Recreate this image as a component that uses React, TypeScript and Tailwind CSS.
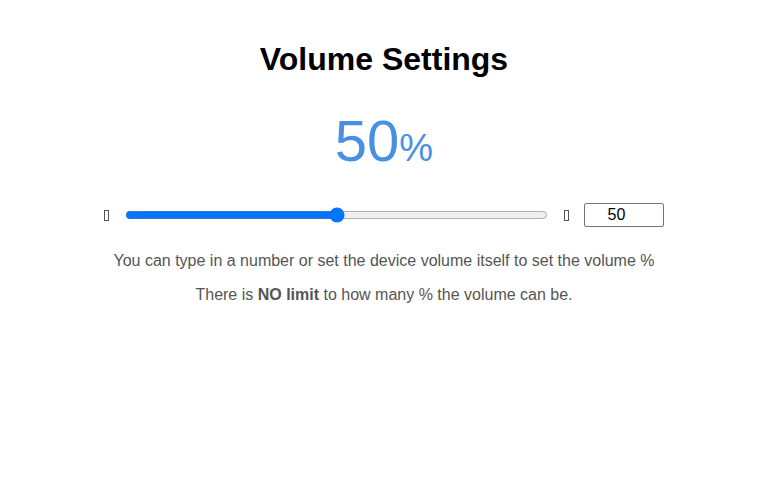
import { useState } from "react";

function MissingGlyph() {
  return <span className="block w-[5px] h-[11px] border border-[#555]" />;
}

export default function App() {
  const [volume, setVolume] = useState(50);

  return (
    <div className="min-h-[480px] bg-white pt-[39px] text-center font-['Liberation_Sans',Arial,sans-serif]">
      <h1 className="text-[32px] leading-[40px] font-bold text-black">Volume Settings</h1>

      <div className="mt-[33px] flex items-baseline justify-center text-[#4a90e2] leading-none">
        <span className="text-[58px]">{volume}</span>
        <span className="text-[38px]">%</span>
      </div>

      <div className="mt-[33px] flex items-center justify-center">
        <MissingGlyph />
        <input
          type="range"
          min={0}
          max={100}
          value={volume}
          onChange={(e) => setVolume(Number(e.target.value))}
          className="ml-4 w-[423px] h-4"
        />
        <span className="ml-4">
          <MissingGlyph />
        </span>
        <input
          type="number"
          value={volume}
          onChange={(e) => setVolume(Number(e.target.value) || 0)}
          className="ml-[15px] w-[80px] h-[24px] border border-[#767676] rounded-[2px] text-center text-[16px] text-black"
        />
      </div>

      <div className="mt-[22px] text-[16px] leading-[24px] text-[#555]">
        <p>You can type in a number or set the device volume itself to set the volume %</p>
        <p className="mt-[10px]">
          There is <b>NO limit</b> to how many % the volume can be.
        </p>
      </div>
    </div>
  );
}
